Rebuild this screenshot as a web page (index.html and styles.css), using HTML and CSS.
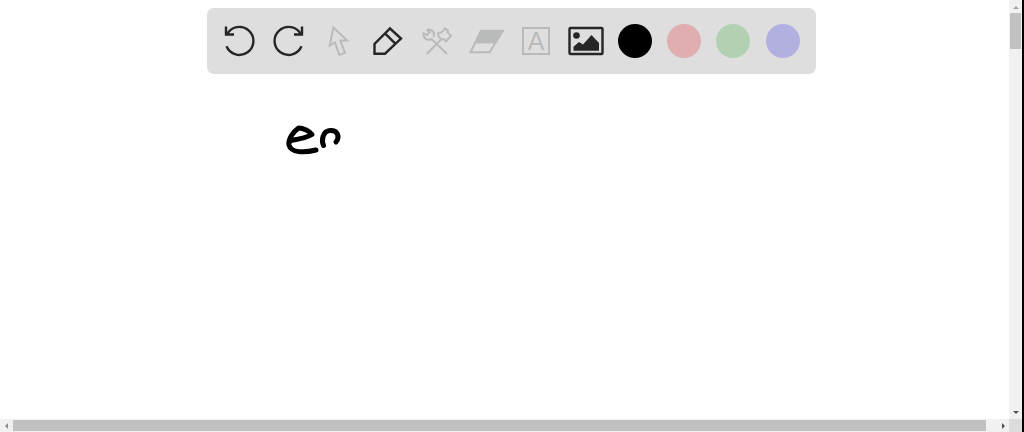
FILE: index.html
```
<!DOCTYPE html>
<html lang="en">
<head>
  <meta charset="UTF-8">
  <meta name="viewport" content="width=device-width, initial-scale=1.0">
  <title>Whiteboard</title>
  <link rel="stylesheet" href="styles.css">
</head>
<body>
  <div class="board">
    <main class="canvas">
      <svg class="drawing" role="img" aria-label="Handwriting">
        <path d="M291 140.500C300 139 308 137 312 134.500C310 131 303 128 298.500 128C293 132 288 139 289 145C291 153 304 153 316 150"/>
        <path d="M323.500 145.500C321 140 323 131 330 130.500C338 130 340 137 336 142"/>
      </svg>
    </main>

    <div class="toolbar" role="toolbar" aria-label="Drawing tools">
      <button class="tool" type="button" aria-label="Undo">
        <svg class="icon" viewBox="0 0 40 40"><path d="M7 5.500V13.500H15M8 13.500A14 14 0 1 1 7.500 25.300"/></svg>
      </button>
      <button class="tool" type="button" aria-label="Redo">
        <svg class="icon" viewBox="0 0 40 40"><path d="M33 5.500V13.500H25M32 13.500A14 14 0 1 0 32.500 25.300"/></svg>
      </button>
      <button class="tool muted" type="button" aria-label="Select">
        <svg class="icon" viewBox="0 0 40 40"><path d="M15.300 6.500L11.700 24.700L17 21.500L21.300 34L27 31.700L22.300 19.700L29 19.300Z"/></svg>
      </button>
      <button class="tool" type="button" aria-label="Pen">
        <svg class="icon" viewBox="0 0 40 40"><path d="M23 7.500L34 17.500L18 32.700H7.500V23ZM18 12.300L28.300 22.700"/></svg>
      </button>
      <button class="tool muted" type="button" aria-label="Tools">
        <svg class="icon" viewBox="0 0 40 40">
          <path d="M10 8.500L12.500 11.500L10 14L6.500 12.500C6 17.500 10.500 20 14.500 18L30 33M16.500 16C18.500 12 15.500 8 10 8.500"/>
          <path d="M9.700 33L24.500 18M21 12.500L25 11L28 7.500L31 9.500L30.500 11.500L34 14.500L29 20.500L27 18L24.500 18.500L21.500 15.500Z"/>
        </svg>
      </button>
      <button class="tool muted" type="button" aria-label="Eraser">
        <svg class="icon" viewBox="0 0 40 40">
          <path d="M15 9.800H37L23.500 31.300H4.500Z"/>
          <path class="solid" d="M15 9.800H37L29 22.500H9.500Z"/>
        </svg>
      </button>
      <button class="tool muted" type="button" aria-label="Text">
        <svg class="icon" viewBox="0 0 40 40">
          <rect x="7" y="7" width="26" height="26"/>
          <text class="letter" x="20" y="29" text-anchor="middle">A</text>
        </svg>
      </button>
      <button class="tool" type="button" aria-label="Image">
        <svg class="icon" viewBox="0 0 40 40">
          <rect x="4.500" y="7" width="33" height="26" rx="1"/>
          <circle class="solid" cx="11.500" cy="14.500" r="3.300"/>
          <path class="solid" d="M8.500 29.700V25.700L14 21L18 23.500L26.500 14L34 22V29.700Z"/>
        </svg>
      </button>
      <button class="tool" type="button" aria-label="Black"><span class="swatch black"></span></button>
      <button class="tool" type="button" aria-label="Red"><span class="swatch red"></span></button>
      <button class="tool" type="button" aria-label="Green"><span class="swatch green"></span></button>
      <button class="tool" type="button" aria-label="Purple"><span class="swatch purple"></span></button>
    </div>

    <div class="scrollbar vertical">
      <button class="arrow faint" type="button" aria-label="Scroll up"><svg class="arrow-icon" viewBox="0 0 8 8"><path d="M1 6L4 3L7 6Z"/></svg></button>
      <div class="track"><div class="thumb"></div></div>
      <button class="arrow" type="button" aria-label="Scroll down"><svg class="arrow-icon" viewBox="0 0 8 8"><path d="M1 2L4 5L7 2Z"/></svg></button>
    </div>
    <div class="scrollbar horizontal">
      <button class="arrow" type="button" aria-label="Scroll left"><svg class="arrow-icon" viewBox="0 0 8 8"><path d="M5 1L2 4L5 7Z"/></svg></button>
      <div class="track"><div class="thumb"></div></div>
      <button class="arrow" type="button" aria-label="Scroll right"><svg class="arrow-icon" viewBox="0 0 8 8"><path d="M3 1L6 4L3 7Z"/></svg></button>
    </div>
    <div class="corner"></div>
  </div>
</body>
</html>
```

FILE: styles.css
```
:root {
  --ink: #262626;
  --muted: #b9bbba;
  --bar: #dedede;
  --track: #f1f1f1;
  --thumb: #c1c1c1;
}

* {
  box-sizing: border-box;
}

body {
  margin: 0;
  background: #fff;
  font-family: "Liberation Sans", Arial, sans-serif;
}

button {
  padding: 0;
  border: 0;
  background: none;
  cursor: pointer;
}

.board {
  display: grid;
  grid-template-columns: 1fr 13px;
  grid-template-rows: 1fr 13px;
  height: 100vh;
  border-right: 2px solid #000;
}

.canvas {
  grid-area: 1 / 1;
}

.drawing {
  display: block;
  width: 100%;
  height: 100%;
  fill: none;
  stroke: #000;
  stroke-width: 5;
  stroke-linecap: round;
  stroke-linejoin: round;
}

/* Toolbar */
.toolbar {
  grid-area: 1 / 1 / 2 / 3;
  justify-self: center;
  align-self: start;
  display: flex;
  align-items: center;
  width: 100%;
  max-width: 609px;
  height: 66px;
  margin-top: 8px;
  padding: 0 8px;
  border-radius: 7px;
  background: var(--bar);
}

.tool {
  flex: 1;
  display: flex;
  justify-content: center;
  align-items: center;
  color: var(--ink);
}

.muted {
  color: var(--muted);
}

.icon {
  width: 40px;
  height: 40px;
  fill: none;
  stroke: currentColor;
  stroke-width: 2.4;
}

.muted .icon {
  stroke-width: 2;
}

.icon .solid {
  fill: currentColor;
  stroke: none;
}

.letter {
  fill: currentColor;
  stroke: none;
  font-size: 25px;
}

.swatch {
  width: 34px;
  height: 34px;
  border-radius: 50%;
}

.black { background: #000; }
.red { background: #e0adb1; }
.green { background: #b2d1b2; }
.purple { background: #b2afe1; }

/* Scrollbars */
.scrollbar {
  display: flex;
  background: var(--track);
}

.vertical {
  grid-area: 1 / 2;
  flex-direction: column;
}

.horizontal {
  grid-area: 2 / 1;
}

.arrow {
  flex: none;
  display: flex;
  justify-content: center;
  align-items: center;
  width: 13px;
  height: 13px;
  color: #505050;
}

.faint {
  color: #a3a3a3;
}

.horizontal .arrow:first-child {
  color: #8a8a8a;
}

.arrow-icon {
  width: 8px;
  height: 8px;
  fill: currentColor;
}

.track {
  flex: 1;
  display: flex;
}

.vertical .track {
  padding: 0 1px;
}

.horizontal .track {
  padding: 1px 0;
}

.thumb {
  background: var(--thumb);
}

.vertical .thumb {
  width: 100%;
  height: 36px;
}

.horizontal .thumb {
  width: 99%;
}

.corner {
  grid-area: 2 / 2;
  background: #dcdcdc;
}
```
